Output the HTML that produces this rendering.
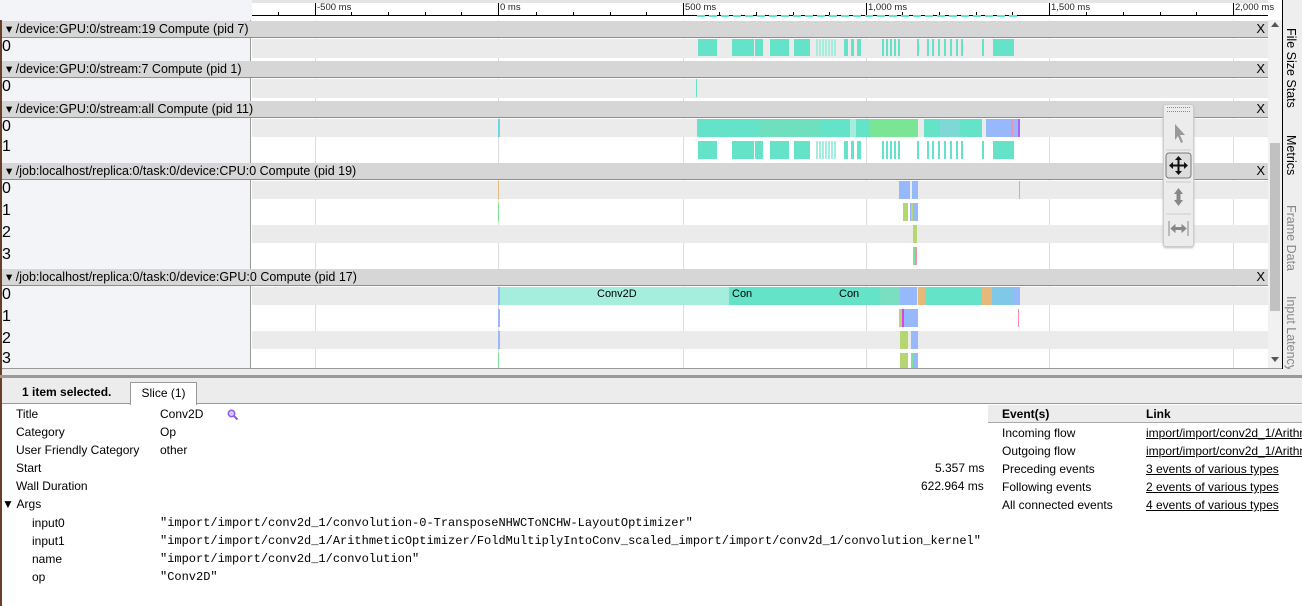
<!DOCTYPE html>
<html><head><meta charset="utf-8"><style>
*{margin:0;padding:0;box-sizing:border-box}
body{width:1302px;height:606px;overflow:hidden;background:#fff;font-family:"Liberation Sans",sans-serif;font-size:12px;color:#000;position:relative}
.a{position:absolute}
.hdr{position:absolute;left:2px;width:1266px;height:17px;background:#d6d6d6;border-bottom:1px solid #8e8e8e;font-size:12.5px;line-height:16px;padding-left:4px}
.hdr .x{position:absolute;right:3px;top:0;font-size:13px}
.lbl{position:absolute;left:2px;width:249px;background:#f3f4f8;border-right:1px solid #999}
.rl{position:absolute;left:2px;font-size:16px;line-height:18px}
.g{position:absolute;left:252px;width:1016px;background:#ebebeb}
.b{position:absolute}
.vl{position:absolute;top:20px;width:1px;height:348px;background:#ddd}
.tick{position:absolute;font-size:9.5px;color:#222;top:2px}
.row{position:absolute;font-size:12px;line-height:18px}
.mono{font-family:"Liberation Mono",monospace;font-size:12px}
</style></head><body>
<div class="a" style="left:0;top:0;width:2px;height:606px;background:#6b3e2a"></div>
<div class="lbl" style="top:0;height:368px"></div>
<div class="a" style="left:252px;top:0;width:1016px;height:20px;background:#fff"></div>
<div class="a" style="left:252px;top:0;width:1016px;height:3px;background:#e5e5e5"></div>
<div class="a" style="left:0;top:0;width:252px;height:20px;background:#f3f4f8"></div>
<div class="a" style="left:252px;top:15px;width:1016px;height:1px;background:#000"></div>
<div id="grid"></div>
<div class="hdr" style="top:21px">▾ /device:GPU:0/stream:19 Compute (pid 7)<span class="x">X</span></div>
<div class="hdr" style="top:61px">▾ /device:GPU:0/stream:7 Compute (pid 1)<span class="x">X</span></div>
<div class="hdr" style="top:101px">▾ /device:GPU:0/stream:all Compute (pid 11)<span class="x">X</span></div>
<div class="hdr" style="top:163px">▾ /job:localhost/replica:0/task:0/device:CPU:0 Compute (pid 19)<span class="x">X</span></div>
<div class="hdr" style="top:269px">▾ /job:localhost/replica:0/task:0/device:GPU:0 Compute (pid 17)<span class="x">X</span></div>
<div class="g" style="top:39px;height:19px"></div>
<div class="g" style="top:79px;height:19px"></div>
<div class="g" style="top:119px;height:18px"></div>
<div class="g" style="top:181px;height:18px"></div>
<div class="g" style="top:225px;height:18px"></div>
<div class="g" style="top:287px;height:18px"></div>
<div class="g" style="top:331px;height:18px"></div>
<div class="rl" style="top:38px">0</div>
<div class="rl" style="top:78px">0</div>
<div class="rl" style="top:118px">0</div>
<div class="rl" style="top:138px">1</div>
<div class="rl" style="top:180px">0</div>
<div class="rl" style="top:202px">1</div>
<div class="rl" style="top:224px">2</div>
<div class="rl" style="top:246px">3</div>
<div class="rl" style="top:286px">0</div>
<div class="rl" style="top:308px">1</div>
<div class="rl" style="top:330px">2</div>
<div class="rl" style="top:350px">3</div>
<div id="bars"></div>
<div class="a" style="left:597px;top:287px;font-size:11px;line-height:14px">Conv2D</div>
<div class="a" style="left:732px;top:287px;font-size:11px;line-height:14px">Con</div>
<div class="a" style="left:839px;top:287px;font-size:11px;line-height:14px">Con</div>
<div class="a" style="left:1163px;top:104px;width:31px;height:143px;background:#ececec;border:1px solid #ccc;border-radius:3px;box-shadow:0 1px 2px #bbb"></div>
<div class="a" style="left:1167px;top:107px;width:23px;height:5px;border-top:1px dotted #888;border-bottom:1px dotted #888"></div>
<svg class="a" style="left:1164px;top:118px" width="29" height="128" viewBox="0 0 29 128">
<path d="M11 6 L11 22 L14 18 L17 25 L19 24 L16 17 L21 17 Z" fill="#999"/>
<line x1="2" y1="32" x2="27" y2="32" stroke="#ccc"/>
<rect x="2" y="35" width="25" height="25" rx="3" fill="#ddd" stroke="#777"/>
<path d="M14.5 38 L18 42 L15.5 42 L15.5 46.5 L20 46.5 L20 44 L24 47.5 L20 51 L20 48.5 L15.5 48.5 L15.5 53 L18 53 L14.5 57 L11 53 L13.5 53 L13.5 48.5 L9 48.5 L9 51 L5 47.5 L9 44 L9 46.5 L13.5 46.5 L13.5 42 L11 42 Z" fill="#111"/>
<line x1="2" y1="64" x2="27" y2="64" stroke="#ccc"/>
<path d="M14.5 70 L19 76 L16.5 76 L16.5 82 L19 82 L14.5 88 L10 82 L12.5 82 L12.5 76 L10 76 Z" fill="#888"/>
<line x1="2" y1="96" x2="27" y2="96" stroke="#ccc"/>
<path d="M5 103 V118 M24 103 V118 M7 110.5 L11 107 V109.5 H18 V107 L22 110.5 L18 114 V111.5 H11 V114 Z" stroke="#888" fill="#888" stroke-width="1"/>
</svg>
<div class="a" style="left:1268px;top:20px;width:14px;height:350px;background:#f1f1f1"></div>
<div class="a" style="left:1270px;top:143px;width:10px;height:168px;background:#c1c1c1"></div>
<div class="a" style="left:1271px;top:22px;width:0;height:0;border:4px solid transparent;border-bottom:5px solid #555;border-top:0"></div>
<div class="a" style="left:1271px;top:357px;width:0;height:0;border:4px solid transparent;border-top:5px solid #555;border-bottom:0"></div>
<div class="a" style="left:1282px;top:0;width:1px;height:378px;background:#000"></div>
<div class="a" style="left:1283px;top:0;width:19px;height:378px;background:#eee"></div>
<div class="a" style="left:1284px;top:28px;writing-mode:vertical-rl;font-size:12.5px;color:#000">File Size Stats</div>
<div class="a" style="left:1284px;top:135px;writing-mode:vertical-rl;font-size:12.5px;color:#000">Metrics</div>
<div class="a" style="left:1284px;top:205px;writing-mode:vertical-rl;font-size:12.5px;color:#888">Frame Data</div>
<div class="a" style="left:1284px;top:296px;writing-mode:vertical-rl;font-size:12.5px;color:#888">Input Latency</div>
<div class="a" style="left:2px;top:368px;width:1280px;height:1px;background:#999"></div>
<div class="a" style="left:2px;top:369px;width:1300px;height:6px;background:#ececec"></div>
<div class="a" style="left:0;top:375px;width:1302px;height:3px;background:#999"></div>
<div class="a" style="left:2px;top:378px;width:1300px;height:26px;background:#ececec;border-bottom:1px solid #999"></div>
<div class="a" style="left:22px;top:385px;font-weight:bold">1 item selected.</div>
<div class="a" style="left:130px;top:382px;width:67px;height:23px;background:#fff;border:1px solid #999;border-bottom:none;text-align:center;line-height:21px">Slice (1)</div>
<div class="row" style="left:16px;top:405px">Title</div><div class="row" style="left:160px;top:405px">Conv2D</div>
<svg class="a" style="left:227px;top:409px" width="12" height="12"><circle cx="4.5" cy="4.5" r="3.2" fill="#d8c8ff" stroke="#8a5cf0" stroke-width="1.5"/><line x1="7" y1="7" x2="10.5" y2="10.5" stroke="#8a5cf0" stroke-width="2"/></svg>
<div class="row" style="left:16px;top:423px">Category</div><div class="row" style="left:160px;top:423px">Op</div>
<div class="row" style="left:16px;top:441px">User Friendly Category</div><div class="row" style="left:160px;top:441px">other</div>
<div class="row" style="left:16px;top:459px">Start</div><div class="row" style="left:935px;top:459px">5.357 ms</div>
<div class="row" style="left:16px;top:477px">Wall Duration</div><div class="row" style="left:921px;top:477px">622.964 ms</div>
<div class="row" style="left:2px;top:495px;font-size:12px">▼ Args</div>
<div class="row" style="left:32px;top:514px">input0</div><div class="row mono" style="left:160px;top:514px">"import/import/conv2d_1/convolution-0-TransposeNHWCToNCHW-LayoutOptimizer"</div>
<div class="row" style="left:32px;top:532px">input1</div><div class="row mono" style="left:160px;top:532px">"import/import/conv2d_1/ArithmeticOptimizer/FoldMultiplyIntoConv_scaled_import/import/conv2d_1/convolution_kernel"</div>
<div class="row" style="left:32px;top:550px">name</div><div class="row mono" style="left:160px;top:550px">"import/import/conv2d_1/convolution"</div>
<div class="row" style="left:32px;top:568px">op</div><div class="row mono" style="left:160px;top:568px">"Conv2D"</div>
<div class="a" style="left:988px;top:405px;width:314px;height:18px;background:#ececec;border-bottom:1px solid #aaa"></div>
<div class="row" style="left:1002px;top:405px;font-weight:bold">Event(s)</div><div class="row" style="left:1146px;top:405px;font-weight:bold">Link</div>
<div class="row" style="left:1002px;top:424px">Incoming flow</div><div class="row" style="left:1146px;top:424px;text-decoration:underline;white-space:nowrap">import/import/conv2d_1/Arithm</div>
<div class="row" style="left:1002px;top:442px">Outgoing flow</div><div class="row" style="left:1146px;top:442px;text-decoration:underline;white-space:nowrap">import/import/conv2d_1/Arithm</div>
<div class="row" style="left:1002px;top:460px">Preceding events</div><div class="row" style="left:1146px;top:460px;text-decoration:underline">3 events of various types</div>
<div class="row" style="left:1002px;top:478px">Following events</div><div class="row" style="left:1146px;top:478px;text-decoration:underline">2 events of various types</div>
<div class="row" style="left:1002px;top:496px">All connected events</div><div class="row" style="left:1146px;top:496px;text-decoration:underline">4 events of various types</div>
<script>
var grid='';
[315,498,683,866,1049,1233].forEach(function(x,i){
 grid+='<div class="vl" style="left:'+x+'px"></div>';
 grid+='<div class="a" style="left:'+x+'px;top:3px;width:1px;height:13px;background:#000"></div>';
 var t=['-500 ms','0 ms','500 ms','1,000 ms','1,500 ms','2,000 ms'][i];
 grid+='<div class="tick" style="left:'+(x+2)+'px">'+t+'</div>';
 for(var k=1;k<5;k++){var tx=x-183.5+k*36.7; if(tx>252) grid+='<div class="a" style="left:'+Math.round(tx)+'px;top:12px;width:1px;height:3px;background:#000"></div>';}
});
document.getElementById('grid').innerHTML=grid;
var M='#64e3c8',L='#a5eedd',B='#97b9fb',G='#b6d672',P='#f58cb4',O='#e6b97a',GR='#7be596';
var h='';
function bar(x1,x2,y,hh,c){h+='<div class="b" style="left:'+x1+'px;top:'+y+'px;width:'+Math.max(1,x2-x1)+'px;height:'+hh+'px;background:'+c+'"></div>';}
function stream(y,hh){
 [[698,717],[732,754],[755,763],[770,789],[794,810],[844,848],[851,854],[857,861],[927,929],[932,934],[938,940],[944,946],[950,952],[956,958],[961,963],[917,919],[982,984],[993,1014]].forEach(function(s){bar(s[0],s[1],y,hh,M)});
 for(var x=816;x<836;x+=3)bar(x,x+1.5,y,hh,L);
 for(var x=882;x<899;x+=4)bar(x,x+2,y,hh,M);
}
stream(39,17);stream(141,18);
for(var x=697;x<1015;x+=12)bar(x,x+8,15,2,M);
bar(696,697,79,18,M);
bar(498,500,119,18,'#6cd6e8');
bar(697,918,119,18,M);bar(760,820,119,18,'#6fe0bd');bar(870,918,119,18,GR);bar(850,856,119,18,L);
bar(924,982,119,18,M);bar(940,960,119,18,'#7ed8d6');bar(986,1018,119,18,B);bar(1011,1013,119,18,P);bar(1018,1020,119,18,'#b060f0');
bar(498,499,181,18,O);bar(899,910,181,18,B);bar(912,918,181,18,B);bar(1019,1020,181,18,B);
bar(498,499,203,18,GR);bar(903,908,203,18,G);bar(910,918,203,18,B);bar(911,913,203,18,G);
bar(913,917,225,18,G);bar(913,915,247,18,GR);bar(915,917,247,18,P);
bar(498,729,287,18,L);bar(498,500,287,18,B);bar(729,900,287,18,M);bar(880,900,287,18,'#7adfc0');
bar(900,917,287,18,B);bar(918,925,287,18,O);bar(925,982,287,18,M);bar(982,992,287,18,O);bar(992,1013,287,18,'#7fc8e8');bar(1013,1020,287,18,B);
bar(498,500,309,18,B);bar(899,903,309,18,G);bar(902,904,309,18,'#e040f0');bar(904,918,309,18,B);bar(1018,1019,309,18,P);
bar(498,500,331,18,B);bar(900,908,331,18,G);bar(911,918,331,18,B);
bar(498,499,353,15,GR);bar(900,908,353,15,G);bar(911,913,353,15,GR);bar(913,918,353,15,B);
document.getElementById('bars').innerHTML=h;
</script>
</body></html>
